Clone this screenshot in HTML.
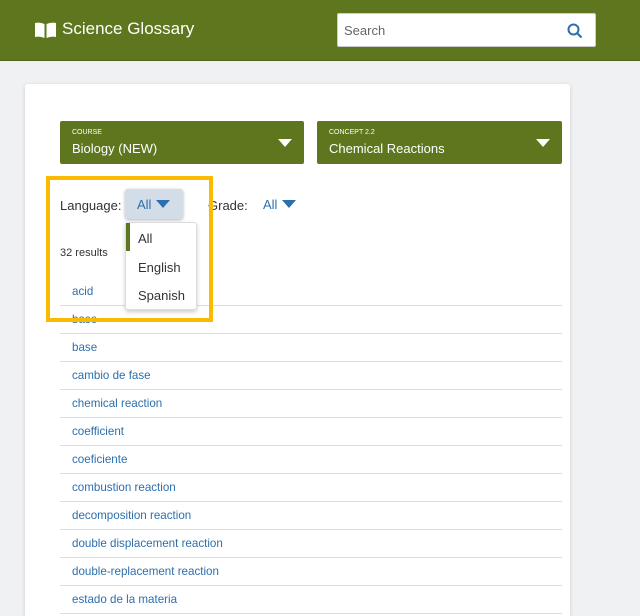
<!DOCTYPE html><html><head><style>
html,body{margin:0;width:640px;height:616px;overflow:hidden}
body{background:#f0f1f3;font-family:"Liberation Sans",sans-serif;position:relative}
.hdr{position:absolute;left:0;top:0;width:640px;height:60px;background:#5e771e;border-bottom:1px solid #4d6318}
.title{position:absolute;left:62px;top:19px;color:#fff;font-size:17px}
.search{position:absolute;left:337px;top:13px;width:259px;height:34px;background:#fff;border:1px solid #ccc;border-radius:2px;box-sizing:border-box}
.search span{position:absolute;left:6px;top:9px;font-size:13px;color:#666}
.card{position:absolute;left:25px;top:84px;width:545px;height:532px;background:#fff;border-radius:3px 3px 0 0;box-shadow:0 1px 4px rgba(0,0,0,.15)}
.dd{position:absolute;top:121px;height:43px;background:#5e771e;border-radius:2px;color:#fff}
.dd .s{position:absolute;left:12px;top:8px;font-size:7px}
.dd .m{position:absolute;left:12px;top:20px;font-size:13px}
.dd .t{position:absolute;right:12px;top:18px;width:0;height:0;border-left:7px solid transparent;border-right:7px solid transparent;border-top:8px solid #fff}
.lbl{position:absolute;font-size:13px;color:#333}
.blue{color:#2c6fad}
.tri{display:inline-block;width:0;height:0;border-left:7px solid transparent;border-right:7px solid transparent;border-top:8px solid #2c6fad;margin-left:5px;vertical-align:1px}
.row{position:absolute;left:60px;width:502px;height:28px;border-bottom:1px solid #ddd;box-sizing:border-box}
.row span{position:absolute;left:12px;top:7px;font-size:11.6px;color:#2c6fad}
</style></head><body>
<div class="hdr">
<svg style="position:absolute;left:35px;top:22px" width="21" height="16" viewBox="0 0 21 16"><path d="M0 1 Q5 0 9.5 2 V16 Q5 14 0 15Z M11.5 2 Q16 0 21 1 V15 Q16 14 11.5 16Z" fill="#fff"/></svg>
<div class="title">Science Glossary</div>
<div class="search"><span>Search</span>
<svg style="position:absolute;right:12px;top:9px" width="16" height="16" viewBox="0 0 16 16"><circle cx="6.5" cy="6.5" r="5" fill="none" stroke="#2c6fad" stroke-width="2"/><path d="M10 10 L14.5 14.5" stroke="#2c6fad" stroke-width="2.2"/></svg></div>
</div>
<div class="card"></div>
<div class="dd" style="left:60px;width:244px"><div class="s">COURSE</div><div class="m">Biology (NEW)</div><div class="t"></div></div>
<div class="dd" style="left:317px;width:245px"><div class="s">CONCEPT 2.2</div><div class="m">Chemical Reactions</div><div class="t"></div></div>
<div class="lbl" style="left:60px;top:198px">Language:</div>
<div style="position:absolute;left:125px;top:189px;width:58px;height:30px;background:#d3dde8;border-radius:3px;box-shadow:0 1px 3px rgba(0,0,0,.3)"></div>
<div class="lbl blue" style="left:137px;top:197px">All<span class="tri"></span></div>
<div class="lbl" style="left:208px;top:198px">Grade:</div>
<div class="lbl blue" style="left:263px;top:197px">All<span class="tri"></span></div>
<div class="lbl" style="left:60px;top:247px;font-size:11px">32 results</div>
<div class="row" style="top:278px"><span>acid</span></div>
<div class="row" style="top:306px"><span>base</span></div>
<div class="row" style="top:334px"><span>base</span></div>
<div class="row" style="top:362px"><span>cambio de fase</span></div>
<div class="row" style="top:390px"><span>chemical reaction</span></div>
<div class="row" style="top:418px"><span>coefficient</span></div>
<div class="row" style="top:446px"><span>coeficiente</span></div>
<div class="row" style="top:474px"><span>combustion reaction</span></div>
<div class="row" style="top:502px"><span>decomposition reaction</span></div>
<div class="row" style="top:530px"><span>double displacement reaction</span></div>
<div class="row" style="top:558px"><span>double-replacement reaction</span></div>
<div class="row" style="top:586px"><span>estado de la materia</span></div>
<div style="position:absolute;left:125px;top:222px;width:72px;height:88px;background:#fff;border:1px solid #ddd;border-radius:3px;box-shadow:0 2px 4px rgba(0,0,0,.2);box-sizing:border-box">
<div style="position:absolute;left:0;top:0;width:4px;height:28px;background:#5e771e"></div>
<div class="lbl" style="left:12px;top:8px">All</div>
<div class="lbl" style="left:12px;top:37px">English</div>
<div class="lbl" style="left:12px;top:65px">Spanish</div>
</div>
<div style="position:absolute;left:46px;top:176px;width:167px;height:146px;border:4px solid #fbb900;box-sizing:border-box"></div>
</body></html>
